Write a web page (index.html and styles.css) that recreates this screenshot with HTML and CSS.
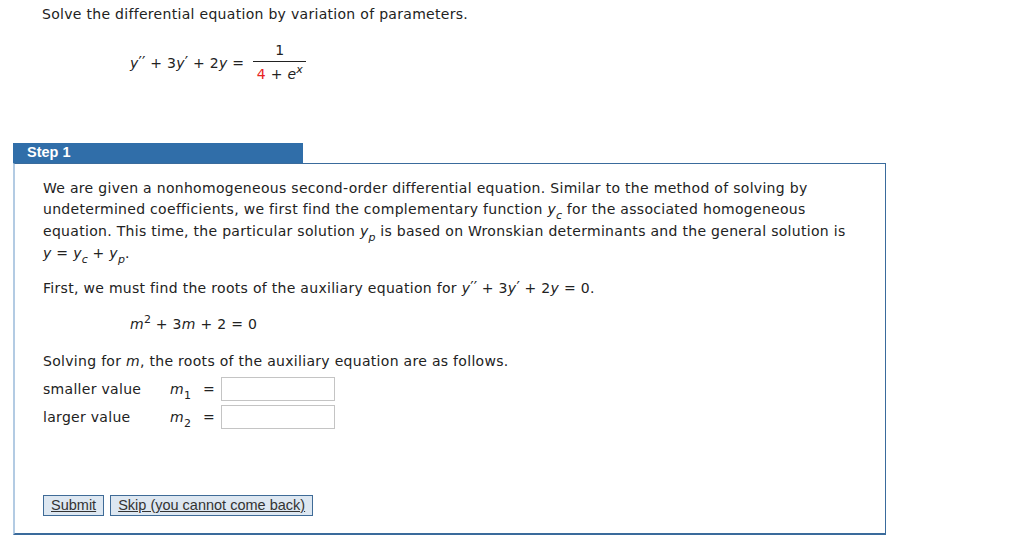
FILE: index.html
```html
<!DOCTYPE html>
<html>
<head>
<meta charset="utf-8">
<link rel="stylesheet" href="styles.css">
</head>
<body>
<div class="question">
  <p class="title">Solve the differential equation by variation of parameters.</p>
  <div class="equation">
    <span class="lhs"><i>y</i><span class="pr">&#8242;&#8242;</span> + 3<i>y</i><span class="pr">&#8242;</span> + 2<i>y</i> =</span>
    <span class="frac">
      <span class="num">1</span>
      <span class="den"><span class="red">4</span> + <i>e</i><sup><i>x</i></sup></span>
    </span>
  </div>
</div>

<div class="step">
  <div class="step-head">Step 1</div>
  <div class="step-body">
    <p class="para first">We are given a nonhomogeneous second-order differential equation. Similar to the method of solving by undetermined coefficients, we first find the complementary function <i>y</i><sub><i>c</i></sub> for the associated homogeneous equation. This time, the particular solution <i>y</i><sub><i>p</i></sub> is based on Wronskian determinants and the general solution is <span class="nowrap"><i>y</i> = <i>y</i><sub><i>c</i></sub> + <i>y</i><sub><i>p</i></sub>.</span></p>
    <p class="para">First, we must find the roots of the auxiliary equation for <i>y</i><span class="pr">&#8242;&#8242;</span> + 3<i>y</i><span class="pr">&#8242;</span> + 2<i>y</i> = 0.</p>
    <p class="para eq2"><i>m</i><sup>2</sup> + 3<i>m</i> + 2 = 0</p>
    <p class="para">Solving for <i>m</i>, the roots of the auxiliary equation are as follows.</p>
    <div class="answers">
      <span class="lab">smaller value</span><span class="var"><i>m</i><sub>1</sub></span><span class="eqs">=</span><span class="box"></span>
      <span class="lab">larger value</span><span class="var"><i>m</i><sub>2</sub></span><span class="eqs">=</span><span class="box"></span>
    </div>
    <div class="buttons">
      <span class="btn">Submit</span>
      <span class="btn">Skip (you cannot come back)</span>
    </div>
  </div>
</div>
</body>
</html>
```

FILE: styles.css
```css
html, body {
  margin: 0;
  padding: 0;
  background: #fff;
}
body {
  font-family: "DejaVu Sans", Verdana, sans-serif;
  font-size: 14px;
  letter-spacing: 0.3px;
  color: #222;
}
i { font-style: italic; }
.pr { font-size: 15px; letter-spacing: 0; }
.nowrap { white-space: nowrap; }
.question {
  padding: 6px 0 0 42px;
}
.title {
  margin: 0;
  line-height: 17px;
}
.equation {
  margin: 17px 0 0 88px;
  display: flex;
  align-items: center;
  height: 46px;
}
.lhs { margin-right: 9px; }
.frac {
  display: inline-flex;
  flex-direction: column;
  align-items: center;
}
.num {
  box-sizing: border-box;
  width: 53px;
  padding: 0 0 3px;
  line-height: 16px;
  border-bottom: 1px solid #222;
  text-align: center;
}
.den {
  line-height: 16px;
  padding-top: 4px;
}
.red { color: #e8231f; }

.step {
  margin: 57px 0 0 13px;
  width: 873px;
}
.step-head {
  width: 276px;
  height: 20px;
  background: #306ea9;
  color: #fff;
  font-family: "Liberation Sans", Arial, sans-serif;
  font-weight: bold;
  font-size: 14.5px;
  letter-spacing: 0;
  line-height: 19px;
  padding-left: 14px;
}
.step-body {
  border-top: 1px solid #3a6b9c;
  border-right: 1px solid #3a6b9c;
  border-bottom: 2px solid #3a6b9c;
  border-left: 2px solid #b3cbe3;
  padding: 14px 24px 17px 28px;
}
.para {
  margin: 0 0 15px;
  line-height: 21px;
}
.para.first { margin-bottom: 13px; }
sub {
  font-size: 11px;
  vertical-align: 0;
  position: relative;
  top: 5px;
  letter-spacing: 0;
}
sup {
  font-size: 11px;
  vertical-align: 0;
  position: relative;
  top: -6px;
  letter-spacing: 0;
}
.eq2 {
  padding-left: 87px;
}
.answers {
  display: grid;
  grid-template-columns: 127px 33px 18px 114px;
  grid-auto-rows: 28px;
  align-items: center;
  margin-top: -12px;
}
.box {
  border: 1px solid #c4c4c4;
  box-sizing: border-box;
  background: #fff;
  height: 24px;
}
.buttons {
  margin-top: 64px;
  display: flex;
  gap: 6px;
}
.btn {
  font-family: "Liberation Sans", Arial, sans-serif;
  font-size: 14.5px;
  letter-spacing: 0;
  line-height: 17px;
  color: #333;
  text-decoration: underline;
  background: #dde7f1;
  border: 1px solid #3f6b97;
  padding: 1px 7px;
}
```
